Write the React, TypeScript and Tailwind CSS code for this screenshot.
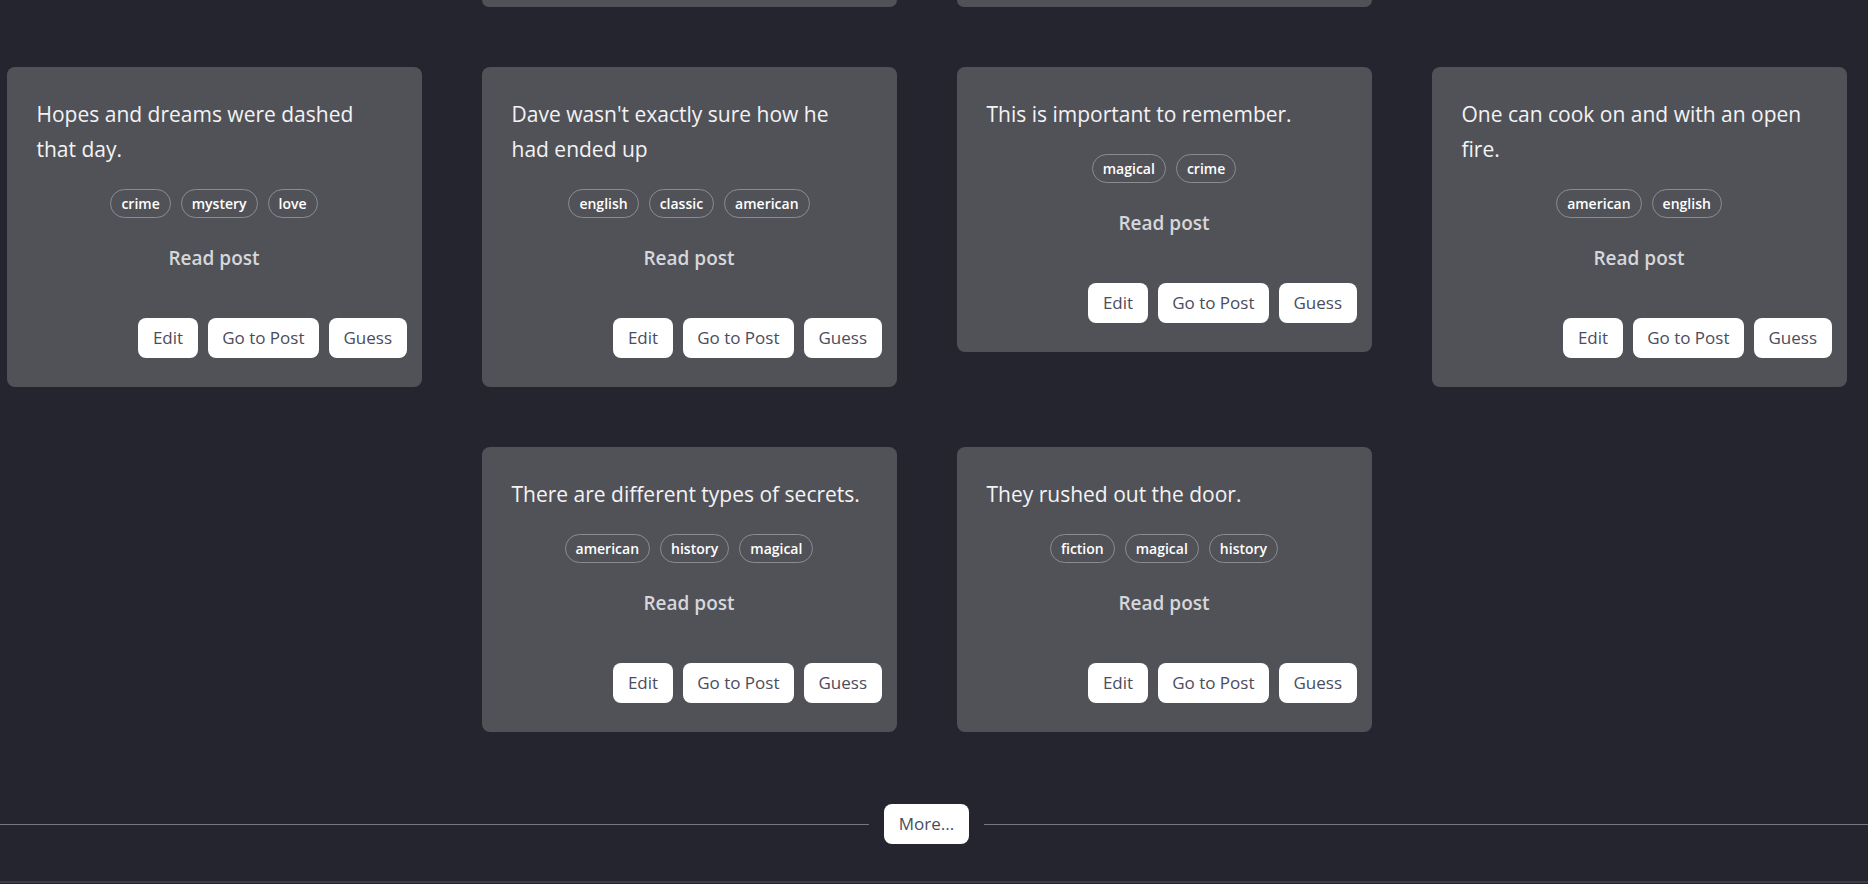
import React from "react"

type Post = {
  title: string
  tags: string[]
}

const posts: Post[] = [
  { title: "Hopes and dreams were dashed that day.", tags: ["crime", "mystery", "love"] },
  { title: "Dave wasn't exactly sure how he had ended up", tags: ["english", "classic", "american"] },
  { title: "This is important to remember.", tags: ["magical", "crime"] },
  { title: "One can cook on and with an open fire.", tags: ["american", "english"] },
  { title: "There are different types of secrets.", tags: ["american", "history", "magical"] },
  { title: "They rushed out the door.", tags: ["fiction", "magical", "history"] },
]

const Tag = ({ label }: { label: string }) => (
  <span className="flex h-[29px] items-center rounded-full border border-[#8b8c92] px-[10px] text-[14px] font-semibold text-white">
    {label}
  </span>
)

const ActionButton = ({ children }: { children: React.ReactNode }) => (
  <button className="flex h-[40px] items-center rounded-lg bg-white px-[14.5px] text-[17px] text-[#4b4c5d]">
    {children}
  </button>
)

const PostCard = ({ post }: { post: Post }) => (
  <div className="flex w-[415px] flex-col rounded-lg bg-[#515258] px-[30px] pt-[30px] pb-[29px]">
    <h2 className="text-[21px] leading-[35px] text-[#f3f3f5]">{post.title}</h2>
    <div className="mt-[22px] flex justify-center gap-[10px]">
      {post.tags.map((tag) => (
        <Tag key={tag} label={tag} />
      ))}
    </div>
    <a className="mt-[27px] cursor-pointer text-center text-[19px] font-semibold leading-[26px] text-[#d6d7db]">
      Read post
    </a>
    <div className="mt-[47px] -mr-[15px] flex justify-end gap-[10px]">
      <ActionButton>Edit</ActionButton>
      <ActionButton>Go to Post</ActionButton>
      <ActionButton>Guess</ActionButton>
    </div>
  </div>
)

export default function App() {
  return (
    <div className="min-h-screen overflow-hidden bg-[#24252e] font-['Open_Sans',sans-serif]">
      <div className="flex flex-col gap-[60px] pr-[15px]">
        {/* bottom edge of the previous page's last row */}
        <div className="flex justify-center gap-[60px]">
          <div className="h-[7px] w-[415px] rounded-b-[7px] bg-[#515258]" />
          <div className="h-[7px] w-[415px] rounded-b-[7px] bg-[#515258]" />
        </div>
        <div className="flex flex-wrap items-start justify-center gap-[60px]">
          {posts.map((post) => (
            <PostCard key={post.title} post={post} />
          ))}
        </div>
      </div>

      <div className="mt-[72px] flex items-center">
        <div className="h-px flex-[869] bg-[#77787f]" />
        <button className="mx-[15px] flex h-[40px] items-center rounded-lg bg-white px-[15px] text-[17px] text-[#4b4c5d]">
          More...
        </button>
        <div className="h-px flex-[884] bg-[#77787f]" />
      </div>

      <footer className="mt-[37px] h-[120px] border-t-2 border-[#3c3d43]" />
    </div>
  )
}
